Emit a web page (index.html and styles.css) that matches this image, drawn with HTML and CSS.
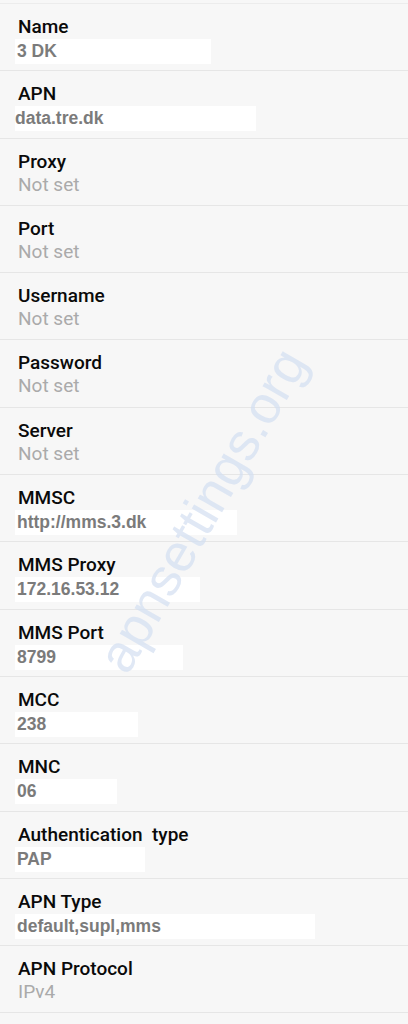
FILE: index.html
```html
<!DOCTYPE html>
<html lang="en">
<head>
<meta charset="utf-8">
<title>APN settings</title>
<link rel="stylesheet" href="styles.css">
</head>
<body>
<div class="screen">
  <div class="list">
    <div class="row"><div class="label">Name</div><div class="value edited w-name">3 DK</div></div>
    <div class="row"><div class="label">APN</div><div class="value edited w-apn shift">data.tre.dk</div></div>
    <div class="row"><div class="label">Proxy</div><div class="value unset">Not set</div></div>
    <div class="row"><div class="label">Port</div><div class="value unset">Not set</div></div>
    <div class="row"><div class="label">Username</div><div class="value unset">Not set</div></div>
    <div class="row"><div class="label">Password</div><div class="value unset">Not set</div></div>
    <div class="row"><div class="label">Server</div><div class="value unset">Not set</div></div>
    <div class="row"><div class="label">MMSC</div><div class="value edited w-mmsc">http://mms.3.dk</div></div>
    <div class="row"><div class="label">MMS Proxy</div><div class="value edited w-mmsproxy">172.16.53.12</div></div>
    <div class="row"><div class="label">MMS Port</div><div class="value edited w-mmsport">8799</div></div>
    <div class="row"><div class="label">MCC</div><div class="value edited w-mcc">238</div></div>
    <div class="row"><div class="label">MNC</div><div class="value edited w-mnc">06</div></div>
    <div class="row"><div class="label">Authentication&nbsp; type</div><div class="value edited w-auth">PAP</div></div>
    <div class="row"><div class="label">APN Type</div><div class="value edited w-type">default,supl,mms</div></div>
    <div class="row"><div class="label">APN Protocol</div><div class="value unset">IPv4</div></div>
  </div>
  <div class="watermark">apnsettings.org</div>
</div>
</body>
</html>
```

FILE: styles.css
```css
html, body {
  margin: 0;
  padding: 0;
  background: #f7f7f7;
}
body {
  width: 408px;
  height: 1024px;
  overflow: hidden;
  font-family: Roboto, "Liberation Sans", Arial, sans-serif;
}
.screen {
  position: relative;
  width: 408px;
  height: 1024px;
  overflow: hidden;
}
.list {
  padding-top: 3px;
  border-top: 1px solid transparent;
}
.list::before {
  content: "";
  display: block;
  height: 1px;
  margin-top: -1px;
  background: #ececec;
}
.row {
  box-sizing: border-box;
  height: 67.3px;
  padding: 12px 0 0 18px;
  border-bottom: 1px solid #e6e6e6;
  display: flex;
  flex-direction: column;
  align-items: flex-start;
}
.label {
  font-size: 19px;
  font-weight: 500;
  line-height: 22px;
  color: #0a0a0a;
  white-space: nowrap;
}
.value {
  margin-top: 1px;
  white-space: nowrap;
}
.unset {
  font-size: 19px;
  line-height: 22px;
  color: #aaaaaa;
}
.edited {
  box-sizing: border-box;
  height: 25px;
  margin-left: -3px;
  padding-left: 2px;
  background: #ffffff;
  font-family: "Liberation Sans", Arial, sans-serif;
  font-weight: 700;
  font-size: 17.5px;
  line-height: 25px;
  color: #7b7b7b;
}
.shift { padding-left: 0; }
.w-name { width: 196px; }
.w-apn { width: 241px; }
.w-mmsc { width: 222px; }
.w-mmsproxy { width: 185px; }
.w-mmsport { width: 168px; }
.w-mcc { width: 123px; }
.w-mnc { width: 102px; }
.w-auth { width: 130px; }
.w-type { width: 300px; }
.watermark {
  position: absolute;
  left: 202px;
  top: 510px;
  transform: translate(-50%, -50%) rotate(-60deg);
  font-family: "Liberation Sans", Arial, sans-serif;
  font-size: 53px;
  line-height: 1;
  color: #d3dff2;
  opacity: 0.7;
  white-space: nowrap;
  pointer-events: none;
}
```
